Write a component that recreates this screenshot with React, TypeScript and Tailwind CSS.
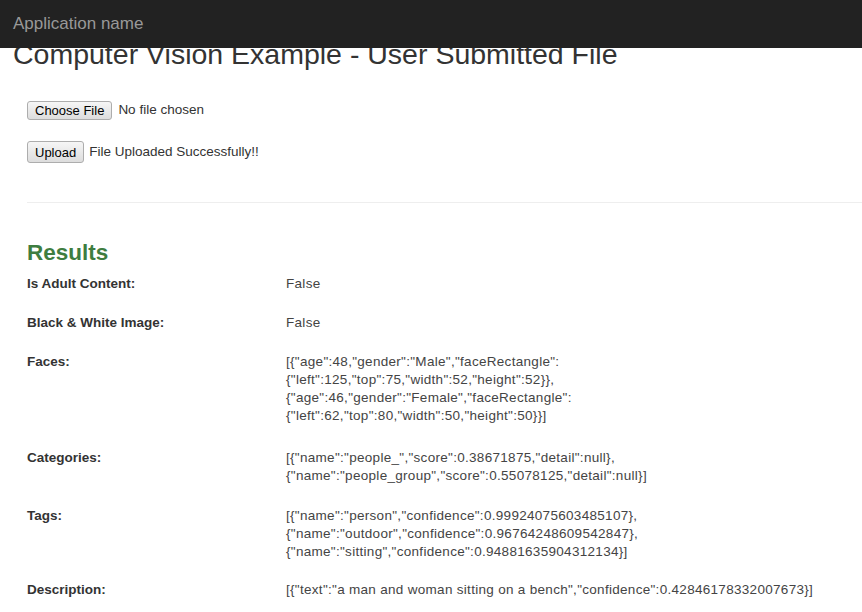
import React from "react"

type Result = { label: string; lines: string[]; mt: string }

const results: Result[] = [
  { label: "Is Adult Content:", lines: ["False"], mt: "mt-0" },
  { label: "Black & White Image:", lines: ["False"], mt: "mt-[21px]" },
  {
    label: "Faces:",
    mt: "mt-[21px]",
    lines: [
      '[{"age":48,"gender":"Male","faceRectangle":',
      '{"left":125,"top":75,"width":52,"height":52}},',
      '{"age":46,"gender":"Female","faceRectangle":',
      '{"left":62,"top":80,"width":50,"height":50}}]',
    ],
  },
  {
    label: "Categories:",
    mt: "mt-[24px]",
    lines: [
      '[{"name":"people_","score":0.38671875,"detail":null},',
      '{"name":"people_group","score":0.55078125,"detail":null}]',
    ],
  },
  {
    label: "Tags:",
    mt: "mt-[22px]",
    lines: [
      '[{"name":"person","confidence":0.99924075603485107},',
      '{"name":"outdoor","confidence":0.96764248609542847},',
      '{"name":"sitting","confidence":0.94881635904312134}]',
    ],
  },
  {
    label: "Description:",
    mt: "mt-[20px]",
    lines: ['[{"text":"a man and woman sitting on a bench","confidence":0.42846178332007673}]'],
  },
]

const btn =
  "border border-[#adadad] rounded-[3px] bg-gradient-to-b from-[#f6f6f6] to-[#dddddd] text-[13px] text-black leading-none"

export default function App() {
  return (
    <div className="min-h-[612px] bg-white text-[#333] font-['Liberation_Sans',Arial,sans-serif] overflow-hidden">
      {/* fixed navbar sits over the top of the heading */}
      <div className="fixed top-0 inset-x-0 z-10 h-[48px] bg-[#222] flex items-center px-[13px]">
        <span className="text-[17px] text-[#999]">Application name</span>
      </div>

      <div className="pt-[37px]">
        <h2 className="pl-[13px] text-[28.5px] leading-[34px] font-normal text-[#333]">
          Computer Vision Example - User Submitted File
        </h2>

        <div className="pl-[27px]">
          <div className="mt-[29px] flex items-center gap-[6px]">
            <button className={`${btn} h-[19px] px-[7px]`}>Choose File</button>
            <span className="text-[13.5px]">No file chosen</span>
          </div>
          <div className="mt-[21px] flex items-center gap-[5px]">
            <button className={`${btn} h-[22px] px-[7px]`}>Upload</button>
            <span className="text-[13.5px]">File Uploaded Successfully!!</span>
          </div>

          <div className="mt-[39px] border-t border-[#eeeeee]" />

          <h3 className="mt-[38px] text-[22.5px] leading-[24px] font-bold text-[#3e7d40]">Results</h3>

          <div className="mt-[10px] flex flex-col leading-[18px]">
            {results.map((r) => (
              <div key={r.label} className={`flex ${r.mt}`}>
                <div className="w-[259px] shrink-0 text-[13.5px] font-bold text-[#333]">{r.label}</div>
                <div className="text-[13.5px] tracking-[0.3px] text-[#444] whitespace-nowrap">
                  {r.lines.map((l, i) => (
                    <div key={i}>{l}</div>
                  ))}
                </div>
              </div>
            ))}
          </div>
        </div>
      </div>
    </div>
  )
}
